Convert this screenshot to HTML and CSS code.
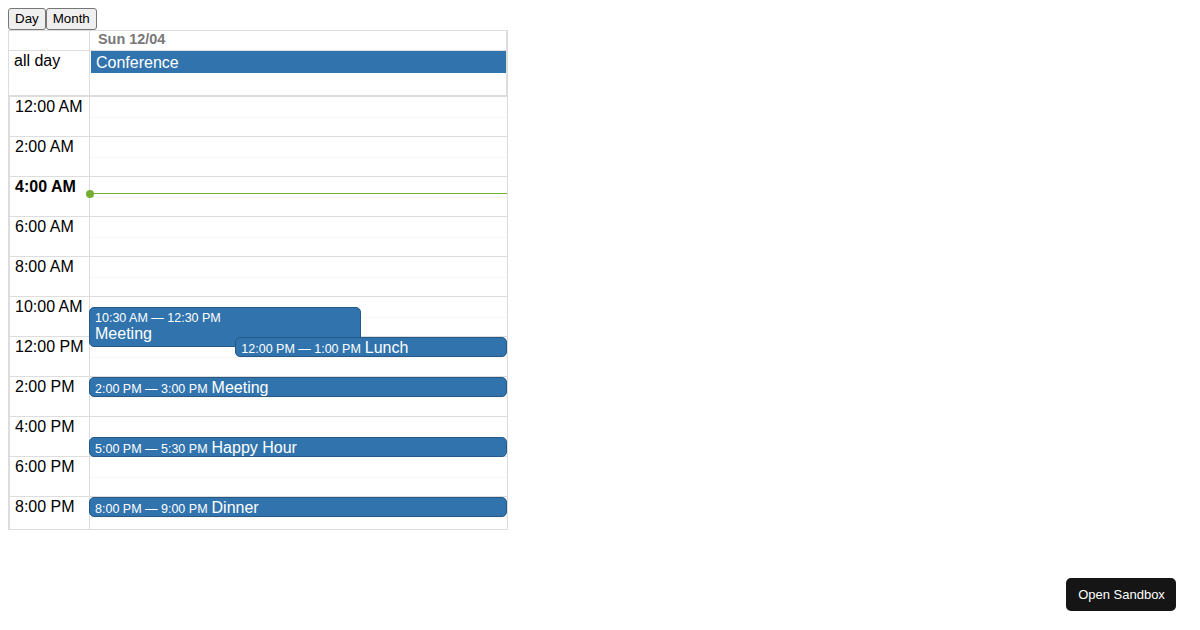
FILE: index.html
```html
<!DOCTYPE html>
<html>
<head>
<meta charset="utf-8">
<link rel="stylesheet" href="styles.css">
</head>
<body>
<div class="toolbar"><button class="btn">Day</button><button class="btn">Month</button></div>
<div class="time-view">
  <div class="time-header">
    <div class="hrow dates">
      <div class="hgutter"></div>
      <div class="date-cell">Sun 12/04</div>
    </div>
    <div class="hrow allday">
      <div class="hgutter allday-label">all day</div>
      <div class="allday-cell"><div class="allday-event">Conference</div></div>
    </div>
  </div>
  <div class="time-content">
    <div class="gutter">
      <div class="ggroup"><span class="glabel">12:00 AM</span></div>
      <div class="ggroup"><span class="glabel">2:00 AM</span></div>
      <div class="ggroup"><span class="glabel current">4:00 AM</span></div>
      <div class="ggroup"><span class="glabel">6:00 AM</span></div>
      <div class="ggroup"><span class="glabel">8:00 AM</span></div>
      <div class="ggroup"><span class="glabel">10:00 AM</span></div>
      <div class="ggroup"><span class="glabel">12:00 PM</span></div>
      <div class="ggroup"><span class="glabel">2:00 PM</span></div>
      <div class="ggroup"><span class="glabel">4:00 PM</span></div>
      <div class="ggroup"><span class="glabel">6:00 PM</span></div>
      <div class="ggroup"><span class="glabel">8:00 PM</span></div>
    </div>
    <div class="day-col">
      <div class="dgroup"><div class="slot"></div><div class="slot second"></div></div>
      <div class="dgroup"><div class="slot"></div><div class="slot second"></div></div>
      <div class="dgroup"><div class="slot"></div><div class="slot second"></div></div>
      <div class="dgroup"><div class="slot"></div><div class="slot second"></div></div>
      <div class="dgroup"><div class="slot"></div><div class="slot second"></div></div>
      <div class="dgroup"><div class="slot"></div><div class="slot second"></div></div>
      <div class="dgroup"><div class="slot"></div><div class="slot second"></div></div>
      <div class="dgroup"><div class="slot"></div><div class="slot second"></div></div>
      <div class="dgroup"><div class="slot"></div><div class="slot second"></div></div>
      <div class="dgroup"><div class="slot"></div><div class="slot second"></div></div>
      <div class="dgroup"><div class="slot"></div><div class="slot second"></div></div>
      <div class="now" style="top:96px"><span class="now-dot"></span></div>
      <div class="events">
        <div class="event tall" style="top:210px;height:40px;left:0;width:65%"><span class="ev-label">10:30 AM — 12:30 PM</span><span class="ev-title">Meeting</span></div>
        <div class="event short" style="top:240px;height:20px;left:35%;width:65%"><span class="ev-label">12:00 PM — 1:00 PM</span><span class="ev-title">Lunch</span></div>
        <div class="event short" style="top:280px;height:20px;left:0;width:100%"><span class="ev-label">2:00 PM — 3:00 PM</span><span class="ev-title">Meeting</span></div>
        <div class="event short" style="top:340px;height:20px;left:0;width:100%"><span class="ev-label">5:00 PM — 5:30 PM</span><span class="ev-title">Happy Hour</span></div>
        <div class="event short" style="top:400px;height:20px;left:0;width:100%"><span class="ev-label">8:00 PM — 9:00 PM</span><span class="ev-title">Dinner</span></div>
      </div>
    </div>
  </div>
</div>
<button class="sandbox-btn">Open Sandbox</button>
</body>
</html>
```

FILE: styles.css
```css
body {
  margin: 8px;
  font-family: "Liberation Sans", Arial, sans-serif;
  font-size: 16px;
  color: #000;
  background: #fff;
}

.toolbar {
  display: flex;
}

.btn {
  box-sizing: border-box;
  height: 22px;
  margin: 0;
  padding: 0 6px 1px;
  font-family: "Liberation Sans", Arial, sans-serif;
  font-size: 13.33px;
  color: #000;
  background: #efefef;
  border: 1px solid #767676;
  border-radius: 3px;
}

.time-view {
  box-sizing: border-box;
  width: 500px;
  height: 500px;
  border: 1px solid #ddd;
  display: flex;
  flex-direction: column;
  overflow: hidden;
}

.time-header {
  flex: none;
  border-right: 1px solid #ddd;
}

.hrow {
  display: flex;
}

.hrow.dates {
  height: 19px;
  border-bottom: 1px solid #ddd;
}

.hrow.allday {
  height: 44px;
}

.hgutter {
  width: 80px;
  flex: none;
}

.allday-label {
  box-sizing: border-box;
  padding: 1px 5px 0;
}

.date-cell {
  flex: 1;
  border-left: 1px solid #ddd;
  padding-left: 8px;
  font-size: 14.4px;
  font-weight: bold;
  line-height: 17px;
  color: #777;
  white-space: nowrap;
}

.allday-cell {
  flex: 1;
  border-left: 1px solid #ddd;
  padding-left: 1px;
}

.allday-event {
  box-sizing: border-box;
  height: 22px;
  padding: 3px 5px 0;
  background: #3174ad;
  color: #fff;
  white-space: nowrap;
}

.time-content {
  flex: 1;
  min-height: 0;
  display: flex;
  align-items: flex-start;
  border-top: 2px solid #ddd;
  border-left: 1px solid #ddd;
  overflow: hidden;
}

.gutter {
  width: 79px;
  flex: none;
}

.ggroup {
  box-sizing: border-box;
  height: 40px;
  border-bottom: 1px solid #ddd;
  padding: 1px 5px 0;
  white-space: nowrap;
}

.glabel.current {
  font-weight: bold;
}

.day-col {
  flex: 1;
  position: relative;
  border-left: 1px solid #ddd;
}

.dgroup {
  box-sizing: border-box;
  height: 40px;
  border-bottom: 1px solid #ddd;
}

.slot {
  height: 20px;
}

.slot.second {
  box-sizing: border-box;
  height: 19px;
  border-top: 1px solid #f7f7f7;
}

.now {
  position: absolute;
  left: 0;
  right: 0;
  height: 1px;
  background: #74ad31;
}

.now-dot {
  position: absolute;
  left: -4px;
  top: -3px;
  width: 8px;
  height: 8px;
  border-radius: 50%;
  background: #74ad31;
}

.events {
  position: absolute;
  top: 0;
  bottom: 0;
  left: -1px;
  right: 0;
}

.event {
  position: absolute;
  box-sizing: border-box;
  background: #3174ad;
  border: 1px solid #265985;
  border-radius: 5px;
  color: #fff;
  overflow: hidden;
  white-space: nowrap;
}

.event.tall {
  display: flex;
  flex-direction: column;
  align-items: flex-start;
  padding: 3px 5px 1px;
}

.event.short {
  display: flex;
  align-items: baseline;
  padding: 1px 5px 0;
}

.ev-label {
  font-size: 12.5px;
  padding-right: 4px;
}

.ev-title {
  font-size: 16px;
  line-height: 1.1;
}

.sandbox-btn {
  position: fixed;
  right: 24px;
  bottom: 19px;
  box-sizing: border-box;
  width: 110px;
  height: 33px;
  padding: 0 0 0 1px;
  background: #151515;
  color: #fff;
  border: none;
  border-radius: 5px;
  font-family: "Liberation Sans", Arial, sans-serif;
  font-size: 13px;
}
```
